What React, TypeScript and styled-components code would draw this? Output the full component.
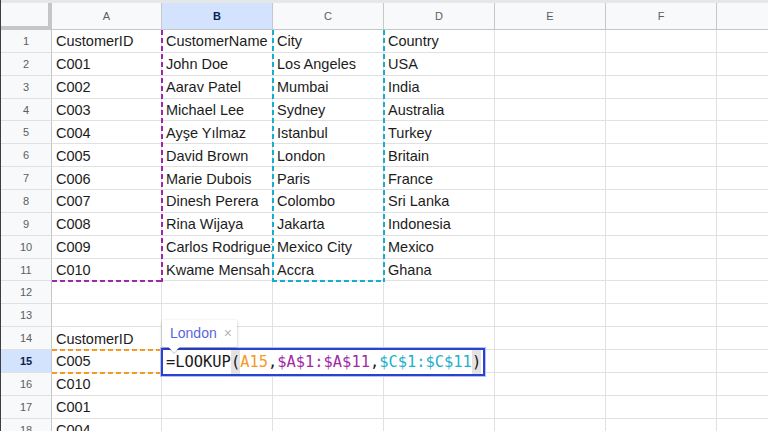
import React from "react";
import styled, { createGlobalStyle, css } from "styled-components";

const GlobalStyle = createGlobalStyle`
  html, body { margin: 0; padding: 0; background: #ffffff; overflow: hidden; }
  body { font-family: "Liberation Sans", Arial, sans-serif; }
`;

const ROW_H = 22.87;
const HEAD_H = 27;
const COLS = [51, 110, 111, 111, 111, 111, 111, 111];
const colStart = (i: number) => COLS.slice(0, i).reduce((a, b) => a + b, 0);
const rowTop = (r: number) => HEAD_H + (r - 1) * ROW_H;

const Page = styled.div`
  width: 768px;
  height: 431px;
  overflow: hidden;
  border-left: 1px solid #3c3f42;
  box-sizing: border-box;
  display: flex;
  flex-direction: column;
`;

const TopStrip = styled.div`
  height: 3px;
  flex: none;
  background: #e6e7e8;
`;

const Sheet = styled.div`
  position: relative;
  display: grid;
  grid-template-columns: ${COLS.map((c) => c + "px").join(" ")};
  grid-template-rows: ${HEAD_H}px repeat(18, ${ROW_H}px);
`;

const Corner = styled.div`
  box-sizing: border-box;
  background: #f8f9fa;
  border-right: 4px solid #c4c7c5;
  border-bottom: 4px solid #c4c7c5;
`;

const ColHeader = styled.div<{ $selected?: boolean }>`
  box-sizing: border-box;
  display: flex;
  align-items: center;
  justify-content: center;
  background: ${(p) => (p.$selected ? "#d3e3fd" : "#f8f9fa")};
  border-right: 1px solid #c7c7c7;
  border-bottom: 1px solid #c4c7c5;
  font-size: 11px;
  color: ${(p) => (p.$selected ? "#0b1f4f" : "#5b5e62")};
  font-weight: ${(p) => (p.$selected ? 700 : 400)};
`;

const RowHeader = styled.div<{ $selected?: boolean }>`
  box-sizing: border-box;
  display: flex;
  align-items: center;
  justify-content: center;
  background: ${(p) => (p.$selected ? "#d3e3fd" : "#f8f9fa")};
  border-right: 1px solid #c4c7c5;
  border-bottom: 1px solid #dfe1e3;
  font-size: 11px;
  color: ${(p) => (p.$selected ? "#0b1f4f" : "#5b5e62")};
  font-weight: ${(p) => (p.$selected ? 700 : 400)};
`;

const Cell = styled.div`
  box-sizing: border-box;
  display: flex;
  align-items: center;
  padding: 1px 4px 0 4px;
  border-right: 1px solid #e1e1e1;
  border-bottom: 1px solid #e1e1e1;
  font-size: 14.5px;
  color: #1c1c1c;
  white-space: nowrap;
  overflow: hidden;
`;

type Edges = { top?: boolean; right?: boolean; bottom?: boolean; left?: boolean };

const dashH = (c: string) =>
  `repeating-linear-gradient(90deg, ${c} 0 5px, transparent 5px 8px)`;
const dashV = (c: string) =>
  `repeating-linear-gradient(180deg, ${c} 0 5px, transparent 5px 8px)`;

const RangeMarker = styled.div<{ $color: string; $edges: Edges }>`
  position: absolute;
  pointer-events: none;
  ${(p) => {
    const layers: string[] = [];
    if (p.$edges.top) layers.push(`${dashH(p.$color)} left top / 100% 2px no-repeat`);
    if (p.$edges.bottom) layers.push(`${dashH(p.$color)} left bottom / 100% 2px no-repeat`);
    if (p.$edges.left) layers.push(`${dashV(p.$color)} left top / 2px 100% no-repeat`);
    if (p.$edges.right) layers.push(`${dashV(p.$color)} right top / 2px 100% no-repeat`);
    return css`
      background: ${layers.join(", ")};
    `;
  }}
`;

const Editor = styled.div`
  position: absolute;
  box-sizing: border-box;
  display: flex;
  align-items: stretch;
  padding: 0 3px 0 3px;
  background: #ffffff;
  border: 2px solid #2a42cf;
  box-shadow: 0 0 0 1px #b4c2f2;
  font-family: "DejaVu Sans Mono", "Liberation Mono", monospace;
  font-size: 15.4px;
  color: #1f1f1f;
  white-space: pre;
  z-index: 3;
`;

const Token = styled.span<{ $color?: string; $paren?: boolean }>`
  display: flex;
  align-items: center;
  color: ${(p) => p.$color || "#1a1a1a"};
  background: ${(p) => (p.$paren ? "#e3e3e3" : "transparent")};
`;

const Tooltip = styled.div`
  position: absolute;
  box-sizing: border-box;
  display: flex;
  align-items: center;
  gap: 7px;
  padding: 0 8px 2px 8px;
  background: #ffffff;
  border-radius: 2px;
  box-shadow: 0 1px 3px rgba(0, 0, 0, 0.28);
  z-index: 4;

  &::after {
    content: "";
    position: absolute;
    left: 8px;
    bottom: -4px;
    width: 8px;
    height: 8px;
    background: #ffffff;
    transform: rotate(45deg);
    box-shadow: 1px 1px 1px rgba(0, 0, 0, 0.18);
  }
`;

const TooltipText = styled.span`
  font-size: 14px;
  color: #5a66dc;
`;

const TooltipClose = styled.span`
  font-size: 14px;
  color: #b4b4b4;
`;

const COL_LETTERS = ["A", "B", "C", "D", "E", "F", "G"];

const DATA: string[][] = [
  ["CustomerID", "CustomerName", "City", "Country"],
  ["C001", "John Doe", "Los Angeles", "USA"],
  ["C002", "Aarav Patel", "Mumbai", "India"],
  ["C003", "Michael Lee", "Sydney", "Australia"],
  ["C004", "Ayşe Yılmaz", "Istanbul", "Turkey"],
  ["C005", "David Brown", "London", "Britain"],
  ["C006", "Marie Dubois", "Paris", "France"],
  ["C007", "Dinesh Perera", "Colombo", "Sri Lanka"],
  ["C008", "Rina Wijaya", "Jakarta", "Indonesia"],
  ["C009", "Carlos Rodriguez", "Mexico City", "Mexico"],
  ["C010", "Kwame Mensah", "Accra", "Ghana"],
  [],
  [],
  ["CustomerID"],
  ["C005"],
  ["C010"],
  ["C001"],
  ["C004"],
];

const ORANGE = "#f7981f";
const PURPLE = "#9c27a8";
const CYAN = "#14aecf";

export default function App() {
  return (
    <>
      <GlobalStyle />
      <Page>
        <TopStrip />
        <Sheet>
          <Corner />
          {COL_LETTERS.map((l) => (
            <ColHeader key={l} $selected={l === "B"}>
              {l}
            </ColHeader>
          ))}
          {DATA.map((row, ri) => (
            <React.Fragment key={ri}>
              <RowHeader $selected={ri + 1 === 15}>{ri + 1}</RowHeader>
              {COL_LETTERS.map((l, ci) => (
                <Cell key={l}>{row[ci] || ""}</Cell>
              ))}
            </React.Fragment>
          ))}

          <RangeMarker
            $color={PURPLE}
            $edges={{ right: true, bottom: true }}
            style={{ left: colStart(1), top: HEAD_H, width: 111, height: 11 * ROW_H }}
          />
          <RangeMarker
            $color={CYAN}
            $edges={{ left: true, right: true, bottom: true }}
            style={{ left: colStart(3) - 1, top: HEAD_H, width: 113, height: 11 * ROW_H }}
          />
          <RangeMarker
            $color={ORANGE}
            $edges={{ top: true, bottom: true }}
            style={{ left: colStart(1), top: rowTop(15) - 1.5, width: 111, height: 25 }}
          />

          <Tooltip style={{ left: 161, top: rowTop(15) - 30, width: 75, height: 27 }}>
            <TooltipText>London</TooltipText>
            <TooltipClose>×</TooltipClose>
          </Tooltip>

          <Editor style={{ left: 160, top: rowTop(15) - 2, width: 324, height: 28 }}>
            <Token>=LOOKUP</Token>
            <Token $paren>(</Token>
            <Token $color={ORANGE}>A15</Token>
            <Token>,</Token>
            <Token $color="#a12ba6">$A$1:$A$11</Token>
            <Token>,</Token>
            <Token $color="#1fb0cc">$C$1:$C$11</Token>
            <Token $paren>)</Token>
          </Editor>
        </Sheet>
      </Page>
    </>
  );
}
